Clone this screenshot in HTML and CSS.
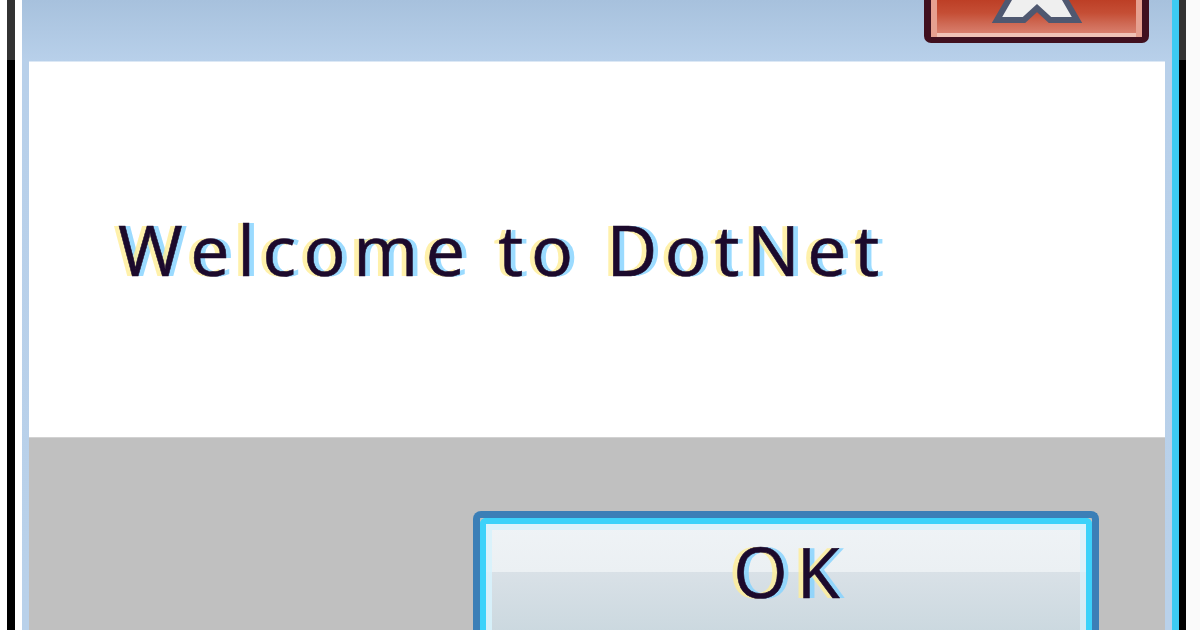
FILE: index.html
```html
<!DOCTYPE html>
<html>
<head>
<meta charset="utf-8">
<link rel="stylesheet" href="styles.css">
</head>
<body>
<div class="screen">
  <div class="pad-left"></div>
  <div class="frame-left"></div>
  <div class="gap"></div>
  <div class="window">
    <div class="titlebar">
      <div class="close">
        <svg class="close-x" width="225" height="37" viewBox="0 0 225 37">
          <polygon points="88,-6 138,-6 153,20 126,20 113,8 100,20 73,20" fill="#efefef" stroke="#4f5870" stroke-width="6" stroke-linejoin="miter"/>
        </svg>
      </div>
    </div>
    <div class="content">
      <p class="message">Welcome to DotNet</p>
    </div>
    <div class="footer">
      <div class="ok">
        <div class="ok-cyan">
          <div class="ok-face">OK</div>
        </div>
      </div>
    </div>
  </div>
  <div class="frame-right"></div>
  <div class="pad-right"></div>
</div>
</body>
</html>
```
FILE: styles.css
```css
html, body {
  margin: 0;
  padding: 0;
  background: #ffffff;
}
.screen {
  display: flex;
  width: 1200px;
  height: 630px;
  overflow: hidden;
}
.screen > div {
  flex-shrink: 0;
}
.pad-left {
  width: 7px;
  background: #ffffff;
}
.frame-left {
  width: 8px;
  background: linear-gradient(#323232 0, #323232 60px, #000000 60px);
}
.gap {
  width: 7px;
  background: #ffffff;
}
.window {
  display: flex;
  flex-direction: column;
  padding: 0 7px;
  box-sizing: border-box;
  background: linear-gradient(#a7c1dd 0, #b8d0ea 61px, #b9d1ea 100%);
  border-right: 7px solid #3ccbf3;
  width: 1157px;
}
.frame-right {
  width: 7px;
  background: linear-gradient(#323232 0, #323232 60px, #000000 60px);
}
.pad-right {
  width: 14px;
  background: #fafafa;
}
.titlebar {
  height: 61px;
  display: flex;
  justify-content: flex-end;
  align-items: flex-start;
  flex-shrink: 0;
}
.close {
  position: relative;
  width: 225px;
  height: 43px;
  margin-right: 16px;
  box-sizing: border-box;
  border: 7px solid #40101f;
  border-top: none;
  border-bottom-width: 6px;
  border-radius: 0 0 7px 7px;
  background: linear-gradient(#bd3f26 0, #c54e35 35%, #cf6a55 65%, #d87d6b 88%, #f0c2b6 88%, #f0c2b6 100%);
  box-shadow: inset 6px 0 #e6a090, inset -6px 0 #e6a090;
}
.close-x {
  position: absolute;
  left: -7px;
  top: 0;
}
.content {
  height: 376px;
  flex-shrink: 0;
  background: #ffffff;
  border-top: 1px solid #dce8f5;
  box-sizing: border-box;
  padding: 0 0 0 89px;
}
.message {
  margin: 0;
  padding-top: 137px;
  font-family: "Open Sans", sans-serif;
  font-size: 70px;
  line-height: 100px;
  color: #1c0a2c;
  letter-spacing: 7.6px;
  -webkit-text-stroke: 0.6px #1c0a2c;
  text-shadow: -5px 0 rgba(255, 238, 150, 0.8), 5px 0 rgba(130, 210, 255, 0.8);
}
.footer {
  flex: 1;
  background: #c0c0c0;
  border-top: 1px solid #d2d2d2;
  padding: 73px 0 0 444px;
}
.ok {
  width: 626px;
  height: 130px;
  box-sizing: border-box;
  border: 7px solid #3b7fb7;
  border-bottom: none;
  border-radius: 8px 8px 0 0;
}
.ok-cyan {
  height: 100%;
  box-sizing: border-box;
  border: 6px solid #3bd2fa;
  border-bottom: none;
  border-radius: 6px 6px 0 0;
}
.ok-face {
  height: 100%;
  box-sizing: border-box;
  background: linear-gradient(#eff3f6 0, #ebf0f3 48px, #d9e1e7 48px, #c9d7de 100%);
  box-shadow: inset 6px 6px rgba(215, 242, 252, 0.9), inset -6px 0 rgba(215, 242, 252, 0.7);
  text-align: center;
  font-family: "Open Sans", sans-serif;
  font-size: 70px;
  line-height: 70px;
  padding: 12px 0 0 10px;
  color: #1c0a2c;
  letter-spacing: 9px;
  -webkit-text-stroke: 0.6px #1c0a2c;
  text-shadow: -5px 0 rgba(255, 238, 150, 0.8), 5px 0 rgba(130, 210, 255, 0.8);
}
```
